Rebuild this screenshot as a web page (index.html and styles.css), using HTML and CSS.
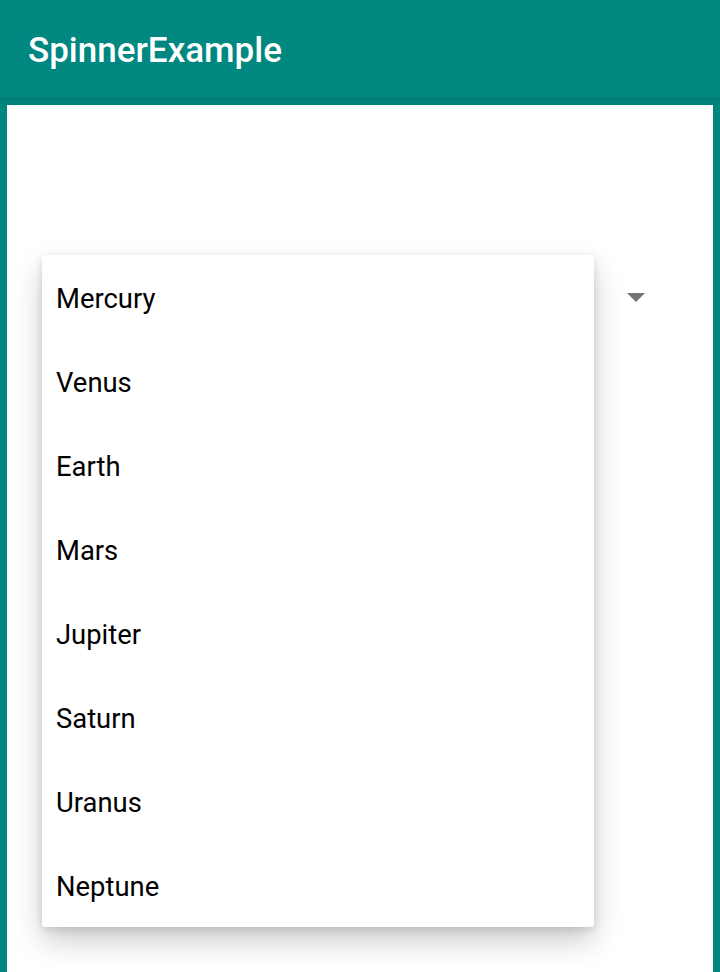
FILE: index.html
```html
<!DOCTYPE html>
<html>
<head>
<meta charset="utf-8">
<link rel="stylesheet" href="styles.css">
</head>
<body>
<div class="screen">
  <header class="appbar">
    <h1 class="title">SpinnerExample</h1>
  </header>
  <div class="shade"></div>
  <main class="content">
    <div class="spinner">
      <svg class="arrow" width="18" height="9" viewBox="0 0 18 9"><path d="M0 0H18L9 9Z" fill="#757575"/></svg>
    </div>
    <ul class="popup">
      <li>Mercury</li>
      <li>Venus</li>
      <li>Earth</li>
      <li>Mars</li>
      <li>Jupiter</li>
      <li>Saturn</li>
      <li>Uranus</li>
      <li>Neptune</li>
    </ul>
  </main>
</div>
</body>
</html>
```

FILE: styles.css
```css
html, body {
  margin: 0;
  padding: 0;
  height: 100%;
}
body {
  background: #008780;
  font-family: Roboto, "Noto Sans", sans-serif;
  overflow: hidden;
}
.screen {
  display: flex;
  flex-direction: column;
  height: 972px;
}
.appbar {
  height: 97px;
  display: flex;
  align-items: center;
  padding-left: 28px;
  padding-top: 3px;
  box-sizing: border-box;
}
.title {
  margin: 0;
  color: #fff;
  font-size: 35px;
  font-weight: 500;
  letter-spacing: 0;
}
.shade {
  height: 8px;
  background: linear-gradient(#007d76, #00837c);
}
.content {
  flex: 1;
  margin: 0 7px;
  background: #fff;
  position: relative;
}
.spinner {
  margin-top: 150px;
  height: 84px;
  display: flex;
  justify-content: flex-end;
  align-items: center;
  padding-right: 68px;
  box-sizing: border-box;
}
.arrow {
  display: block;
}
.popup {
  position: absolute;
  left: 35px;
  top: 150px;
  width: 552px;
  margin: 0;
  padding: 0;
  list-style: none;
  background: #fff;
  border-radius: 3px;
  box-shadow: 0 14px 30px rgba(0,0,0,0.2), 0 3px 8px rgba(0,0,0,0.12);
}
.popup li {
  height: 84px;
  box-sizing: border-box;
  display: flex;
  align-items: center;
  padding-left: 14px;
  padding-top: 4px;
  font-size: 27.4px;
  color: #000;
}
```
